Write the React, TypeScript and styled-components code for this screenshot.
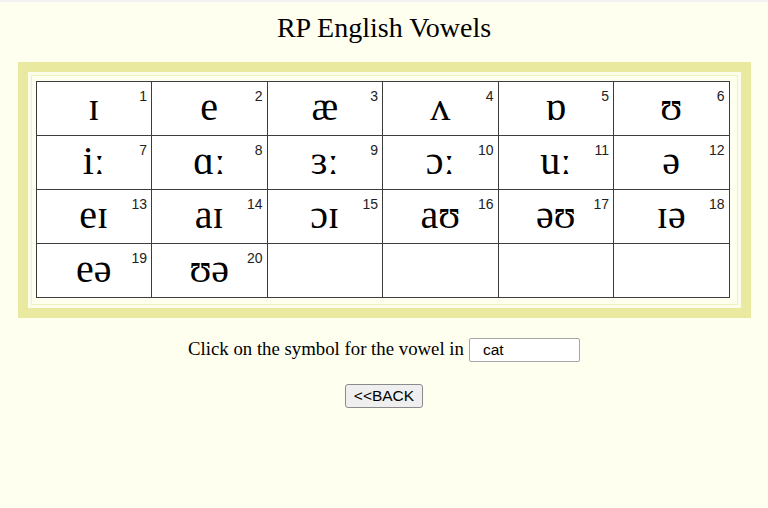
import { useState } from 'react';
import styled, { createGlobalStyle } from 'styled-components';

const GlobalStyle = createGlobalStyle`
  html, body {
    margin: 0;
    padding: 0;
    background: #fffff0;
  }
  body {
    border-top: 2px solid #f2f2f2;
    font-family: "Liberation Serif", "Times New Roman", serif;
    color: #000;
  }
`;

const Page = styled.div`
  display: flex;
  flex-direction: column;
  align-items: center;
  padding-top: 10px;
`;

const Title = styled.h1`
  margin: 0;
  font-size: 28px;
  line-height: 32px;
  font-weight: normal;
`;

const Panel = styled.div`
  margin-top: 18px;
  width: 733px;
  box-sizing: border-box;
  padding: 10px;
  background: #e9e9a0;
`;

const Frame = styled.div`
  border: 3px solid #fdfdeb;
`;

const InnerFrame = styled.div`
  border: 1px solid #f1f1bb;
  background: #fffff0;
  padding: 5px 7px 6px 4px;
`;

const Grid = styled.div`
  display: grid;
  grid-template-columns: repeat(6, 115.5px);
  grid-auto-rows: 54px;
  width: 694px;
  box-sizing: border-box;
  border-left: 1px solid #3c3c3c;
  border-top: 1px solid #3c3c3c;
  background: #fff;
`;

const Cell = styled.div<{ $active: boolean }>`
  position: relative;
  box-sizing: border-box;
  border-right: 1px solid #3c3c3c;
  border-bottom: 1px solid #3c3c3c;
  background: ${(p) => (p.$active ? '#f6f6d8' : '#fff')};
  cursor: pointer;
  text-align: center;
`;

const Symbol = styled.span`
  display: block;
  padding-top: 3px;
  font-family: "Liberation Serif", "DejaVu Serif", serif;
  font-size: 40px;
  line-height: 44px;
`;

const Num = styled.span`
  position: absolute;
  top: 6px;
  right: 4px;
  font-family: "Liberation Sans", Arial, sans-serif;
  font-size: 14px;
  color: #222;
`;

const Prompt = styled.div`
  margin-top: 19px;
  font-size: 18.8px;
  line-height: 24px;
`;

const WordBox = styled.input`
  box-sizing: border-box;
  width: 111px;
  height: 24px;
  margin-left: 5px;
  padding: 0 0 0 13px;
  border: 1px solid #a6a6a6;
  border-radius: 2px;
  background: #fff;
  font-family: "Liberation Sans", Arial, sans-serif;
  font-size: 15.5px;
  color: #000;
  outline: none;
`;

const BackButton = styled.button`
  margin-top: 22px;
  box-sizing: border-box;
  width: 78px;
  height: 24px;
  padding: 0;
  border: 1px solid #8a8a8a;
  border-radius: 3px;
  background: #efefef;
  font-family: "Liberation Sans", Arial, sans-serif;
  font-size: 15.5px;
  color: #000;
`;

const vowels = [
  'ɪ', 'e', 'æ', 'ʌ', 'ɒ', 'ʊ',
  'iː', 'ɑː', 'ɜː', 'ɔː', 'uː', 'ə',
  'eɪ', 'aɪ', 'ɔɪ', 'aʊ', 'əʊ', 'ɪə',
  'eə', 'ʊə',
];

const App = () => {
  const [picked, setPicked] = useState<number | null>(null);
  const cells = Array.from({ length: 24 }, (_, i) => vowels[i]);

  return (
    <>
      <GlobalStyle />
      <Page>
        <Title>RP English Vowels</Title>
        <Panel>
          <Frame>
            <InnerFrame>
              <Grid>
                {cells.map((v, i) => (
                  <Cell key={i} $active={picked === i} onClick={() => v && setPicked(i)}>
                    {v && (
                      <>
                        <Symbol>{v}</Symbol>
                        <Num>{i + 1}</Num>
                      </>
                    )}
                  </Cell>
                ))}
              </Grid>
            </InnerFrame>
          </Frame>
        </Panel>
        <Prompt>
          Click on the symbol for the vowel in
          <WordBox defaultValue="cat" readOnly />
        </Prompt>
        <BackButton>&lt;&lt;BACK</BackButton>
      </Page>
    </>
  );
};

export default App;
